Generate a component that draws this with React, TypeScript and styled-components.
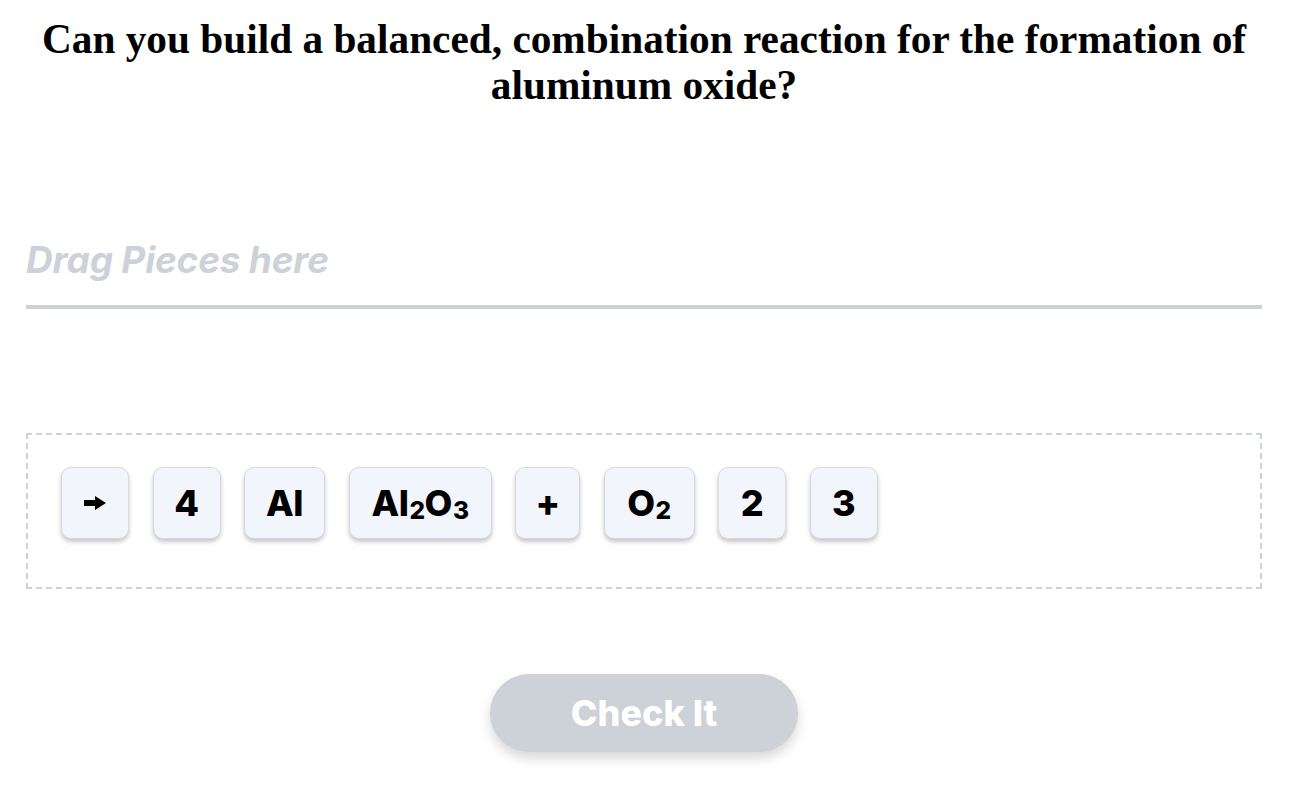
import React from "react";
import styled, { createGlobalStyle } from "styled-components";

const Global = createGlobalStyle`
  html, body { margin: 0; padding: 0; background: #ffffff; }
  body { font-family: "Inter", "Open Sans", sans-serif; }
`;

const Page = styled.div`
  padding: 16px 40px 40px 26px;
  display: flex;
  flex-direction: column;
`;

const Title = styled.h1`
  margin: 0;
  font-family: "Liberation Serif", "Times New Roman", serif;
  font-weight: 700;
  font-size: 41.3px;
  line-height: 46px;
  text-align: center;
  color: #000;
`;

const DropZone = styled.div`
  margin-top: 132px;
  padding-bottom: 25px;
  border-bottom: 4px solid #cdd1d8;
`;

const DropHint = styled.div`
  font-family: "Inter", sans-serif;
  font-weight: 700;
  font-style: italic;
  font-size: 37px;
  line-height: 40px;
  color: #cdd1d8;
  letter-spacing: -0.2px;
`;

const dash = "#cdd1d8";

const Bank = styled.div`
  margin-top: 124px;
  padding: 34px 35px 50px 35px;
  display: flex;
  flex-wrap: wrap;
  gap: 23.5px;
  align-items: center;
  background:
    linear-gradient(to right, ${dash} 6px, transparent 6px) top left / 10px 2px repeat-x,
    linear-gradient(to right, ${dash} 6px, transparent 6px) bottom left / 10px 2px repeat-x,
    linear-gradient(to bottom, ${dash} 6px, transparent 6px) top left / 2px 10px repeat-y,
    linear-gradient(to bottom, ${dash} 6px, transparent 6px) top right / 2px 10px repeat-y;
`;

const Tile = styled.div<{ $w: number }>`
  width: ${(p) => p.$w}px;
  height: 72px;
  box-sizing: border-box;
  display: flex;
  align-items: center;
  justify-content: center;
  background: #f2f5fc;
  border: 1px solid #d6d9df;
  border-radius: 10px;
  box-shadow: 0 3px 4px rgba(0, 0, 0, 0.22);
  font-family: "Inter", sans-serif;
  font-weight: 800;
  font-size: 36px;
  letter-spacing: -0.5px;
  color: #000;
  cursor: grab;
`;

const Sub = styled.span`
  font-size: 0.68em;
  position: relative;
  top: 0.3em;
  margin-left: 1px;
`;

const Actions = styled.div`
  margin-top: 85px;
  display: flex;
  justify-content: center;
`;

const CheckButton = styled.button`
  width: 308px;
  height: 78px;
  border: none;
  border-radius: 39px;
  background: #cdd1d8;
  color: #ffffff;
  font-family: "Inter", sans-serif;
  font-weight: 800;
  font-size: 36px;
  letter-spacing: 0;
  box-shadow: 0 6px 12px rgba(0, 0, 0, 0.16);
  cursor: not-allowed;
`;

const Arrow = () => (
  <svg width="22" height="14" viewBox="0 0 22 14" aria-hidden="true">
    <path d="M0 4 H11 V0 L22 7 L11 14 V10 H0 Z" fill="#000" />
  </svg>
);

export default function App() {
  return (
    <>
      <Global />
      <Page>
        <Title>
          Can you build a balanced, combination reaction for the formation of aluminum oxide?
        </Title>
        <DropZone>
          <DropHint>Drag Pieces here</DropHint>
        </DropZone>
        <Bank>
          <Tile $w={68}><Arrow /></Tile>
          <Tile $w={68}>4</Tile>
          <Tile $w={81}>Al</Tile>
          <Tile $w={143}>Al<Sub>2</Sub>O<Sub>3</Sub></Tile>
          <Tile $w={65}>+</Tile>
          <Tile $w={91}>O<Sub>2</Sub></Tile>
          <Tile $w={68}>2</Tile>
          <Tile $w={68}>3</Tile>
        </Bank>
        <Actions>
          <CheckButton>Check It</CheckButton>
        </Actions>
      </Page>
    </>
  );
}
